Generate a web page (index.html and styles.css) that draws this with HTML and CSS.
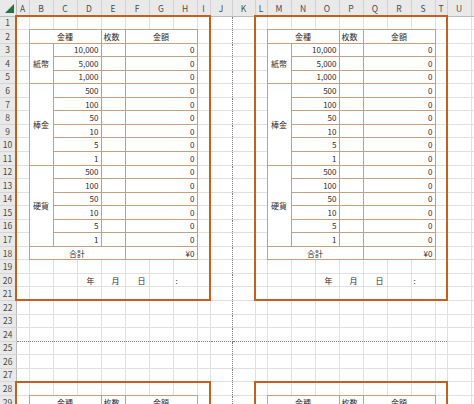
FILE: index.html
```html
<!DOCTYPE html>
<html lang="ja">
<head>
<meta charset="utf-8">
<title>金種表</title>
<link rel="stylesheet" href="styles.css">
</head>
<body>
<div class="sheet">
<table class="grid">
<colgroup>
<col class="cw-rh"><col class="cw-a"><col class="cw-n"><col class="cw-n"><col class="cw-n"><col class="cw-n"><col class="cw-n"><col class="cw-n"><col class="cw-n"><col class="cw-i"><col class="cw-j"><col class="cw-k"><col class="cw-l"><col class="cw-n"><col class="cw-n"><col class="cw-n"><col class="cw-n"><col class="cw-n"><col class="cw-n"><col class="cw-n"><col class="cw-t"><col class="cw-n"><col class="cw-n">
</colgroup>
<thead>
<tr class="hd"><th class="corner"><svg width="16" height="15" viewBox="0 0 16 15"><polygon points="5,13 14,13 14,4" fill="#217346"/></svg></th><th>A</th><th>B</th><th>C</th><th>D</th><th>E</th><th>F</th><th>G</th><th>H</th><th>I</th><th>J</th><th>K</th><th>L</th><th>M</th><th>N</th><th>O</th><th>P</th><th>Q</th><th>R</th><th>S</th><th>T</th><th>U</th><th></th></tr>
</thead>
<tbody>
<tr class="top"><th>1</th><td class="a"></td><td></td><td></td><td></td><td></td><td></td><td></td><td></td><td class="i"></td><td class="j"></td><td class="k"></td><td class="l"></td><td></td><td></td><td></td><td></td><td></td><td></td><td></td><td class="tt"></td><td></td><td></td></tr>
<tr><th>2</th><td class="a"></td><td class="t c" colspan="3">金種</td><td class="t lt">枚数</td><td class="t c" colspan="3">金額</td><td class="i"></td><td class="j"></td><td class="k"></td><td class="l"></td><td class="t c" colspan="3">金種</td><td class="t lt">枚数</td><td class="t c" colspan="3">金額</td><td class="tt"></td><td></td><td></td></tr>
<tr><th>3</th><td class="a"></td><td class="t c" rowspan="3">紙幣</td><td class="t r" colspan="2">10,000</td><td class="t"></td><td class="t r" colspan="3">0</td><td class="i"></td><td class="j"></td><td class="k"></td><td class="l"></td><td class="t c" rowspan="3">紙幣</td><td class="t r" colspan="2">10,000</td><td class="t"></td><td class="t r" colspan="3">0</td><td class="tt"></td><td></td><td></td></tr>
<tr><th>4</th><td class="a"></td><td class="t r" colspan="2">5,000</td><td class="t"></td><td class="t r" colspan="3">0</td><td class="i"></td><td class="j"></td><td class="k"></td><td class="l"></td><td class="t r" colspan="2">5,000</td><td class="t"></td><td class="t r" colspan="3">0</td><td class="tt"></td><td></td><td></td></tr>
<tr><th>5</th><td class="a"></td><td class="t r" colspan="2">1,000</td><td class="t"></td><td class="t r" colspan="3">0</td><td class="i"></td><td class="j"></td><td class="k"></td><td class="l"></td><td class="t r" colspan="2">1,000</td><td class="t"></td><td class="t r" colspan="3">0</td><td class="tt"></td><td></td><td></td></tr>
<tr><th>6</th><td class="a"></td><td class="t c" rowspan="6">棒金</td><td class="t r" colspan="2">500</td><td class="t"></td><td class="t r" colspan="3">0</td><td class="i"></td><td class="j"></td><td class="k"></td><td class="l"></td><td class="t c" rowspan="6">棒金</td><td class="t r" colspan="2">500</td><td class="t"></td><td class="t r" colspan="3">0</td><td class="tt"></td><td></td><td></td></tr>
<tr><th>7</th><td class="a"></td><td class="t r" colspan="2">100</td><td class="t"></td><td class="t r" colspan="3">0</td><td class="i"></td><td class="j"></td><td class="k"></td><td class="l"></td><td class="t r" colspan="2">100</td><td class="t"></td><td class="t r" colspan="3">0</td><td class="tt"></td><td></td><td></td></tr>
<tr><th>8</th><td class="a"></td><td class="t r" colspan="2">50</td><td class="t"></td><td class="t r" colspan="3">0</td><td class="i"></td><td class="j"></td><td class="k"></td><td class="l"></td><td class="t r" colspan="2">50</td><td class="t"></td><td class="t r" colspan="3">0</td><td class="tt"></td><td></td><td></td></tr>
<tr><th>9</th><td class="a"></td><td class="t r" colspan="2">10</td><td class="t"></td><td class="t r" colspan="3">0</td><td class="i"></td><td class="j"></td><td class="k"></td><td class="l"></td><td class="t r" colspan="2">10</td><td class="t"></td><td class="t r" colspan="3">0</td><td class="tt"></td><td></td><td></td></tr>
<tr><th>10</th><td class="a"></td><td class="t r" colspan="2">5</td><td class="t"></td><td class="t r" colspan="3">0</td><td class="i"></td><td class="j"></td><td class="k"></td><td class="l"></td><td class="t r" colspan="2">5</td><td class="t"></td><td class="t r" colspan="3">0</td><td class="tt"></td><td></td><td></td></tr>
<tr><th>11</th><td class="a"></td><td class="t r" colspan="2">1</td><td class="t"></td><td class="t r" colspan="3">0</td><td class="i"></td><td class="j"></td><td class="k"></td><td class="l"></td><td class="t r" colspan="2">1</td><td class="t"></td><td class="t r" colspan="3">0</td><td class="tt"></td><td></td><td></td></tr>
<tr><th>12</th><td class="a"></td><td class="t c" rowspan="6">硬貨</td><td class="t r" colspan="2">500</td><td class="t"></td><td class="t r" colspan="3">0</td><td class="i"></td><td class="j"></td><td class="k"></td><td class="l"></td><td class="t c" rowspan="6">硬貨</td><td class="t r" colspan="2">500</td><td class="t"></td><td class="t r" colspan="3">0</td><td class="tt"></td><td></td><td></td></tr>
<tr><th>13</th><td class="a"></td><td class="t r" colspan="2">100</td><td class="t"></td><td class="t r" colspan="3">0</td><td class="i"></td><td class="j"></td><td class="k"></td><td class="l"></td><td class="t r" colspan="2">100</td><td class="t"></td><td class="t r" colspan="3">0</td><td class="tt"></td><td></td><td></td></tr>
<tr><th>14</th><td class="a"></td><td class="t r" colspan="2">50</td><td class="t"></td><td class="t r" colspan="3">0</td><td class="i"></td><td class="j"></td><td class="k"></td><td class="l"></td><td class="t r" colspan="2">50</td><td class="t"></td><td class="t r" colspan="3">0</td><td class="tt"></td><td></td><td></td></tr>
<tr><th>15</th><td class="a"></td><td class="t r" colspan="2">10</td><td class="t"></td><td class="t r" colspan="3">0</td><td class="i"></td><td class="j"></td><td class="k"></td><td class="l"></td><td class="t r" colspan="2">10</td><td class="t"></td><td class="t r" colspan="3">0</td><td class="tt"></td><td></td><td></td></tr>
<tr><th>16</th><td class="a"></td><td class="t r" colspan="2">5</td><td class="t"></td><td class="t r" colspan="3">0</td><td class="i"></td><td class="j"></td><td class="k"></td><td class="l"></td><td class="t r" colspan="2">5</td><td class="t"></td><td class="t r" colspan="3">0</td><td class="tt"></td><td></td><td></td></tr>
<tr><th>17</th><td class="a"></td><td class="t r" colspan="2">1</td><td class="t"></td><td class="t r" colspan="3">0</td><td class="i"></td><td class="j"></td><td class="k"></td><td class="l"></td><td class="t r" colspan="2">1</td><td class="t"></td><td class="t r" colspan="3">0</td><td class="tt"></td><td></td><td></td></tr>
<tr><th>18</th><td class="a"></td><td class="t c" colspan="4">合計</td><td class="t r" colspan="3">¥0</td><td class="i"></td><td class="j"></td><td class="k"></td><td class="l"></td><td class="t c" colspan="4">合計</td><td class="t r" colspan="3">¥0</td><td class="tt"></td><td></td><td></td></tr>
<tr><th>19</th><td class="a"></td><td></td><td></td><td></td><td></td><td></td><td></td><td></td><td class="i"></td><td class="j"></td><td class="k"></td><td class="l"></td><td></td><td></td><td></td><td></td><td></td><td></td><td></td><td class="tt"></td><td></td><td></td></tr>
<tr><th>20</th><td class="a"></td><td></td><td></td><td class="yr">年</td><td class="mo">月</td><td class="dy">日</td><td></td><td class="cl">:</td><td class="i"></td><td class="j"></td><td class="k"></td><td class="l"></td><td></td><td></td><td class="yr">年</td><td class="mo">月</td><td class="dy">日</td><td></td><td class="cl">:</td><td class="tt"></td><td></td><td></td></tr>
<tr class="bot"><th>21</th><td class="a"></td><td></td><td></td><td></td><td></td><td></td><td></td><td></td><td class="i"></td><td class="j"></td><td class="k"></td><td class="l"></td><td></td><td></td><td></td><td></td><td></td><td></td><td></td><td class="tt"></td><td></td><td></td></tr>
<tr><th>22</th><td></td><td></td><td></td><td></td><td></td><td></td><td></td><td></td><td></td><td class="j"></td><td class="k"></td><td></td><td></td><td></td><td></td><td></td><td></td><td></td><td></td><td></td><td></td><td></td></tr>
<tr><th>23</th><td></td><td></td><td></td><td></td><td></td><td></td><td></td><td></td><td></td><td class="j"></td><td class="k"></td><td></td><td></td><td></td><td></td><td></td><td></td><td></td><td></td><td></td><td></td><td></td></tr>
<tr class="pb"><th>24</th><td></td><td></td><td></td><td></td><td></td><td></td><td></td><td></td><td></td><td class="j"></td><td class="k"></td><td></td><td></td><td></td><td></td><td></td><td></td><td></td><td></td><td></td><td></td><td></td></tr>
<tr><th>25</th><td></td><td></td><td></td><td></td><td></td><td></td><td></td><td></td><td></td><td class="j"></td><td class="k"></td><td></td><td></td><td></td><td></td><td></td><td></td><td></td><td></td><td></td><td></td><td></td></tr>
<tr><th>26</th><td></td><td></td><td></td><td></td><td></td><td></td><td></td><td></td><td></td><td class="j"></td><td class="k"></td><td></td><td></td><td></td><td></td><td></td><td></td><td></td><td></td><td></td><td></td><td></td></tr>
<tr><th>27</th><td></td><td></td><td></td><td></td><td></td><td></td><td></td><td></td><td></td><td class="j"></td><td class="k"></td><td></td><td></td><td></td><td></td><td></td><td></td><td></td><td></td><td></td><td></td><td></td></tr>
<tr class="top"><th>28</th><td class="a"></td><td></td><td></td><td></td><td></td><td></td><td></td><td></td><td class="i"></td><td class="j"></td><td class="k"></td><td class="l"></td><td></td><td></td><td></td><td></td><td></td><td></td><td></td><td class="tt"></td><td></td><td></td></tr>
<tr><th>29</th><td class="a"></td><td class="t c" colspan="3">金種</td><td class="t lt">枚数</td><td class="t c" colspan="3">金額</td><td class="i"></td><td class="j"></td><td class="k"></td><td class="l"></td><td class="t c" colspan="3">金種</td><td class="t lt">枚数</td><td class="t c" colspan="3">金額</td><td class="tt"></td><td></td><td></td></tr>
<tr><th>30</th><td class="a"></td><td class="t c" rowspan="3">紙幣</td><td class="t r" colspan="2">10,000</td><td class="t"></td><td class="t r" colspan="3">0</td><td class="i"></td><td class="j"></td><td class="k"></td><td class="l"></td><td class="t c" rowspan="3">紙幣</td><td class="t r" colspan="2">10,000</td><td class="t"></td><td class="t r" colspan="3">0</td><td class="tt"></td><td></td><td></td></tr>
</tbody>
</table>
</div>
</body>
</html>
```

FILE: styles.css
```css
html, body {
  margin: 0;
  padding: 0;
  background: #ffffff;
}

.sheet {
  width: 474px;
  height: 404px;
  overflow: hidden;
  background: #ffffff;
}

.grid {
  border-collapse: collapse;
  table-layout: fixed;
  width: 495px;
  font-family: "Noto Sans CJK JP", "Noto Sans", sans-serif;
  font-size: 8px;
  color: #2c2c2c;
}

.cw-rh { width: 16px; }
.cw-a  { width: 13px; }
.cw-n  { width: 24px; }
.cw-i  { width: 13px; }
.cw-j  { width: 22px; }
.cw-k  { width: 23px; }
.cw-l  { width: 12px; }
.cw-t  { width: 12px; }

.grid thead th {
  height: 15px;
  padding: 0;
  background: #e9e9e9;
  color: #4a4a4a;
  font-weight: normal;
  font-size: 8.5px;
  line-height: 12px;
  text-align: center;
  border-right: 1px solid #d2d2d2;
  border-bottom: 1px solid #bcbcbc;
}

.grid thead th.corner {
  border-right: 1px solid #bcbcbc;
}

.grid thead th.corner svg {
  display: block;
}

.grid tbody tr {
  height: 13.55px;
}

.grid tbody th {
  padding: 0;
  background: #e9e9e9;
  color: #4a4a4a;
  font-weight: normal;
  font-size: 8.5px;
  line-height: 11px;
  text-align: center;
  border-right: 1px solid #bcbcbc;
  border-bottom: 1px solid #d6d6d6;
}

.grid td {
  padding: 0;
  line-height: 11px;
  white-space: nowrap;
  overflow: hidden;
  vertical-align: middle;
  border-right: 1px solid #e0e0e0;
  border-bottom: 1px solid #e0e0e0;
}

/* money table cells */
.grid td.t {
  border: 1px double #c3a084;
  background: #ffffff;
}

.c  { text-align: center; }
.r  { text-align: right; padding-right: 2px !important; }
.lt { text-align: left; padding-left: 2px !important; }

/* date row */
.yr { text-align: right; padding-right: 6px !important; }
.mo { text-align: right; padding-right: 5px !important; }
.dy { text-align: right; padding-right: 3px !important; }
.cl { text-align: left; padding-left: 2px !important; }

/* print area frame */
.grid td.a  { border-left: 2px solid #c65f1d; }
.grid td.i  { border-right: 2px solid #c65f1d; }
.grid td.l  { border-left: 2px solid #c65f1d; }
.grid td.tt { border-right: 2px solid #c65f1d; }

.grid tr.top td:nth-child(n+2):nth-child(-n+10),
.grid tr.top td:nth-child(n+13):nth-child(-n+21) {
  border-top: 2px solid #c65f1d;
}

.grid tr.bot td:nth-child(n+2):nth-child(-n+10),
.grid tr.bot td:nth-child(n+13):nth-child(-n+21) {
  border-bottom: 2px solid #c65f1d;
}

/* page breaks */
.grid td.j { border-right: 1px dotted #7c7c7c; }

.grid tr.pb td:nth-child(-n+21) {
  border-bottom: 1px dotted #7c7c7c;
}
```
